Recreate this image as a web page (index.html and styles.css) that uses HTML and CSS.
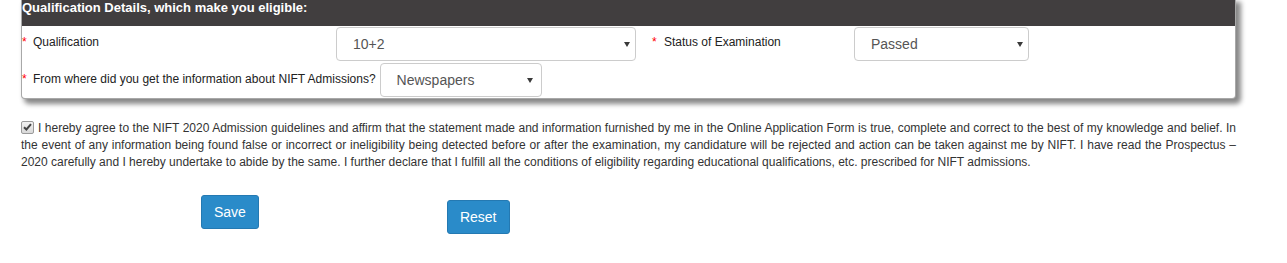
FILE: index.html
```html
<!DOCTYPE html>
<html>
<head>
<meta charset="utf-8">
<link rel="stylesheet" href="styles.css">
</head>
<body>
<div class="page">
  <div class="panel">
    <div class="panel-head">Qualification Details, which make you eligible:</div>
    <div class="panel-body">
      <div class="row row-one">
        <div class="cell cell-q"><span class="req">*</span><span class="lbl">Qualification</span></div>
        <div class="sel sel-q"><select><option>10+2</option></select></div>
        <div class="cell cell-s"><span class="req">*</span><span class="lbl">Status of Examination</span></div>
        <div class="sel sel-s"><select><option>Passed</option></select></div>
      </div>
      <div class="row row-two">
        <div class="cell cell-f"><span class="req">*</span><span class="lbl">From where did you get the information about NIFT Admissions?</span></div>
        <div class="sel sel-n"><select><option>Newspapers</option></select></div>
      </div>
    </div>
  </div>

  <p class="declare"><span class="chk"><svg width="9" height="8" viewBox="0 0 9 8"><path d="M1 4.2 L3.4 6.5 L8 1.2" fill="none" stroke="#444" stroke-width="2"/></svg></span>I hereby agree to the NIFT 2020 Admission guidelines and affirm that the statement made and information furnished by me in the Online Application Form is true, complete and correct to the best of my knowledge and belief. In the event of any information being found false or incorrect or ineligibility being detected before or after the examination, my candidature will be rejected and action can be taken against me by NIFT. I have read the Prospectus – 2020 carefully and I hereby undertake to abide by the same. I further declare that I fulfill all the conditions of eligibility regarding educational qualifications, etc. prescribed for NIFT admissions.</p>

  <div class="actions">
    <button class="btn btn-save">Save</button>
    <button class="btn btn-reset">Reset</button>
  </div>
</div>
</body>
</html>
```
FILE: styles.css
```css
html, body {
  margin: 0;
  padding: 0;
  background: #fff;
  font-family: "Liberation Sans", Arial, sans-serif;
  color: #333;
}
.page {
  margin-left: 21px;
  width: 1215px;
}
.panel {
  margin-left: 1px;
  width: 1213px;
  background: #fff;
  border-radius: 0 0 3px 3px;
  box-shadow: 0 0 0 1px #a8a8a8, 4px 4px 5px 2px #888;
}
.panel-head {
  background: #413e3f;
  color: #fff;
  font-size: 13px;
  font-weight: bold;
  line-height: 15px;
  height: 26px;
  box-sizing: border-box;
  padding: 0;
}
.panel-body {
  padding: 1px 0 1px 0;
}
.row {
  display: flex;
  align-items: flex-start;
  height: 34px;
}
.row-two {
  margin-top: 2px;
}
.cell {
  display: flex;
  font-size: 12px;
  color: #222;
  box-sizing: border-box;
  padding-top: 8px;
}
.row-two .cell {
  padding-top: 9px;
}
.req {
  color: #f00;
  width: 11px;
  flex: none;
}
.cell-q { width: 314px; }
.cell-s { width: 218px; padding-left: 16px; }
.cell-s .req { width: 12px; }
.cell-f { margin-right: 4px; }
.sel {
  position: relative;
  flex: none;
}
.sel select {
  -webkit-appearance: none;
  appearance: none;
  width: 100%;
  height: 34px;
  box-sizing: border-box;
  border: 1px solid #ccc;
  border-radius: 4px;
  background: #fff;
  color: #555;
  font-family: "Liberation Sans", Arial, sans-serif;
  font-size: 14px;
  line-height: 20px;
  padding: 6px 16px;
  margin: 0;
}
.sel::after {
  content: "";
  position: absolute;
  top: 15px;
  right: 6px;
  border-left: 3px solid transparent;
  border-right: 3px solid transparent;
  border-top: 5px solid #3a3a3a;
}
.sel-q { width: 300px; }
.sel-s { width: 175px; }
.sel-n { width: 162px; }
.sel-n::after { right: 9px; }

.declare {
  margin: 22px 0 0 0;
  font-size: 12px;
  line-height: 17px;
  text-align: justify;
  color: #333;
}
.chk {
  display: inline-flex;
  align-items: center;
  justify-content: center;
  width: 11px;
  height: 11px;
  border: 1px solid #9a9a9a;
  border-radius: 2px;
  background: linear-gradient(#f2f2f2, #d8d8d8);
  margin-right: 4px;
  vertical-align: 1px;
}
.actions {
  display: flex;
  align-items: flex-start;
  margin-top: 24px;
}
.btn {
  font-family: "Liberation Sans", Arial, sans-serif;
  font-size: 14px;
  line-height: 20px;
  padding: 6px 12px;
  color: #fff;
  background: #2a8bc9;
  border: 1px solid #2479b2;
  border-radius: 3px;
  margin: 0;
}
.btn-save { margin-left: 180px; }
.btn-reset { margin-left: 188px; margin-top: 5px; }
```
